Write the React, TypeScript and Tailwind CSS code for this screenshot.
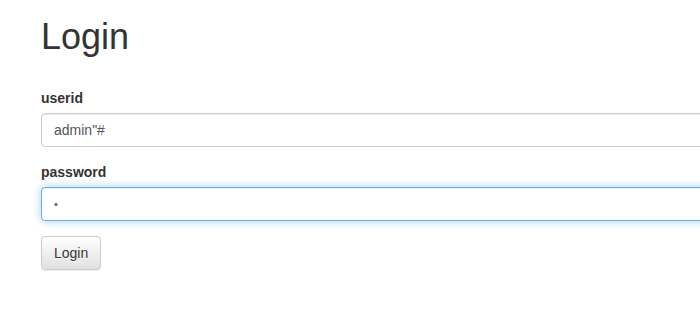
import React from "react";

export default function App() {
  return (
    <div className="w-[700px] h-[327px] overflow-hidden bg-white text-[#333] font-['Liberation_Sans',Arial,sans-serif] text-[14px] leading-[20px]">
      <div className="pl-[41px] w-[1200px]">
        <h1 className="mt-[17px] text-[36px] leading-[39.6px] font-normal text-[#333]">Login</h1>
        <form className="mt-[31px]" onSubmit={(e) => e.preventDefault()}>
          <div className="mb-[15px]">
            <label className="block mb-[5px] font-bold">userid</label>
            <input
              type="text"
              readOnly
              value={'admin"#'}
              className="block w-[1140px] h-[34px] px-[12px] py-[6px] text-[14px] leading-[20px] text-[#555] bg-white border border-[#ccc] rounded-[4px] shadow-[inset_0_1px_1px_rgba(0,0,0,0.075)] outline-none"
            />
          </div>
          <div className="mb-[15px]">
            <label className="block mb-[5px] font-bold">password</label>
            <input
              type="password"
              readOnly
              value="a"
              className="block w-[1140px] h-[34px] px-[12px] py-[6px] text-[11px] leading-[20px] text-[#555] bg-white border border-[#66afe9] rounded-[4px] shadow-[inset_0_1px_1px_rgba(0,0,0,0.075),0_0_8px_rgba(102,175,233,0.6)] outline-none"
            />
          </div>
          <button
            type="submit"
            className="inline-block px-[12px] py-[6px] text-[14px] leading-[20px] text-[#333] border border-[#ccc] rounded-[4px] bg-[linear-gradient(to_bottom,#fff_0%,#e0e0e0_100%)] [text-shadow:0_1px_0_#fff] shadow-[inset_0_1px_0_rgba(255,255,255,0.15),0_1px_1px_rgba(0,0,0,0.075)]"
          >
            Login
          </button>
        </form>
      </div>
    </div>
  );
}
